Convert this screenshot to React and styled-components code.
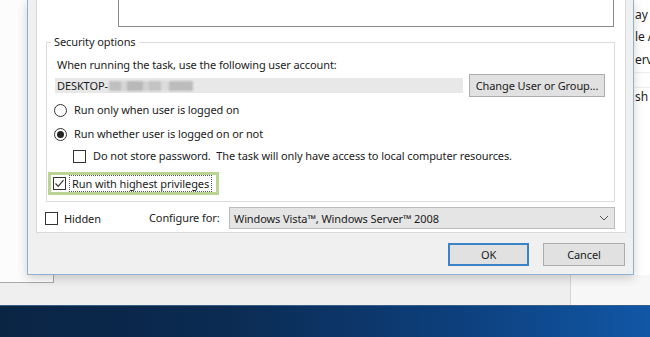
import React from 'react';
import styled, { createGlobalStyle } from 'styled-components';

const Global = createGlobalStyle`
  html, body { margin: 0; padding: 0; }
  body { background: #efefef; font-family: "Noto Sans", "Open Sans", sans-serif; }
  * { box-sizing: border-box; }
`;

const Screen = styled.div`
  width: 650px;
  height: 337px;
  overflow: hidden;
  display: grid;
  grid-template-rows: 305px 32px;
  font-size: 11px;
  letter-spacing: -0.1px;
  color: #1b1b1b;
`;

const Desktop = styled.div`
  position: relative;
  background: #efefef;
  overflow: hidden;
`;

const LeftWindow = styled.div`
  position: absolute;
  left: 0;
  top: 0;
  width: 54px;
  height: 283px;
  background: #fcfcfc;
  border-right: 1px solid #a9a9a9;
  border-bottom: 1px solid #a9a9a9;
`;

const RightWindow = styled.div`
  position: absolute;
  left: 570px;
  top: 0;
  width: 80px;
  height: 305px;
  background: #f7f7f7;
  border-left: 1px solid #d4d4d4;
  overflow: hidden;
`;

const RightPane = styled.div`
  height: 275px;
  background: #ffffff;
  padding: 6px 0 0 64px;
  display: flex;
  flex-direction: column;
  font-size: 12px;
`;

const RightItem = styled.div`
  height: ${p => p.$h}px;
  line-height: 18px;
  white-space: nowrap;
  border-bottom: ${p => (p.$line ? '1px solid #ececec' : 'none')};
`;

const Dialog = styled.div`
  position: absolute;
  left: 27px;
  top: 0;
  width: 607px;
  height: 275px;
  background: #f0f0f0;
  border: 1px solid #8db1d2;
  border-top: none;
  box-shadow: 0 3px 10px rgba(0, 0, 0, 0.18);
  display: flex;
  flex-direction: column;
`;

const Panel = styled.div`
  margin: 0 7px 0 8px;
  height: 233px;
  background: #ffffff;
  border: 1px solid #dadada;
  border-top: none;
  display: flex;
  flex-direction: column;
`;

const TextBox = styled.div`
  margin: 0 11px 0 81px;
  height: 27px;
  border: 1px solid #8a8a8a;
  border-top: none;
  background: #ffffff;
  flex: none;
`;

const GroupBox = styled.div`
  position: relative;
  margin: 15px 10px 0 9px;
  height: 160px;
  border: 1px solid #dcdcdc;
  padding: 13px 0 0 0;
  display: flex;
  flex-direction: column;
  flex: none;
`;

const Legend = styled.span`
  position: absolute;
  left: 4px;
  top: -10px;
  padding: 0 3px;
  background: #ffffff;
  line-height: 18px;
`;

const TextRow = styled.div`
  height: 18px;
  line-height: 18px;
  padding-left: 10px;
`;

const AccountRow = styled.div`
  display: flex;
  align-items: center;
  height: 23px;
  padding-left: 8px;
  gap: 6px;
`;

const AccountField = styled.div`
  width: 408px;
  height: 15px;
  background: #e8e8e8;
  display: flex;
  align-items: center;
  padding-left: 2px;
  line-height: 15px;
`;

const Blurred = styled.span`
  display: inline-block;
  width: 84px;
  height: 10px;
  margin-left: 1px;
  background: linear-gradient(90deg, #b9b9b9 0 14%, #d4d4d4 14% 22%, #b0b0b0 22% 40%, #cfcfcf 40% 48%, #bdbdbd 48% 62%, #dadada 62% 72%, #b5b5b5 72% 100%);
  filter: blur(1.3px);
  opacity: 0.85;
`;

const Button = styled.button`
  width: ${p => p.$w}px;
  height: 23px;
  padding: 0;
  font: inherit;
  letter-spacing: inherit;
  white-space: nowrap;
  color: #1b1b1b;
  background: #e1e1e1;
  border: ${p => (p.$default ? '2px solid #3b84c8' : '1px solid #adadad')};
  flex: none;
`;

const OptionRow = styled.div`
  display: flex;
  align-items: center;
  height: ${p => p.$h}px;
  padding-left: ${p => p.$indent}px;
  gap: 7px;
  margin-top: ${p => p.$mt || 0}px;
`;

const Radio = styled.span`
  width: 13px;
  height: 13px;
  border-radius: 50%;
  border: 1px solid #333333;
  background: #ffffff;
  display: flex;
  align-items: center;
  justify-content: center;
  flex: none;
  &::after {
    content: '';
    width: 7px;
    height: 7px;
    border-radius: 50%;
    background: ${p => (p.$checked ? '#222222' : 'transparent')};
  }
`;

const Check = styled.span`
  width: 13px;
  height: 13px;
  border: 1px solid #333333;
  background: #ffffff;
  display: flex;
  align-items: center;
  justify-content: center;
  flex: none;
`;

const Highlight = styled.div`
  margin: 6px 0 0 1px;
  width: 171px;
  height: 23px;
  border: 3px solid #bcd396;
  display: flex;
  align-items: center;
  padding-left: 2px;
  gap: 3px;
`;

const Focus = styled.span`
  border: 1px dotted #555555;
  padding: 0 2px;
  line-height: 15px;
  white-space: nowrap;
`;

const Label = styled.span`
  white-space: nowrap;
  line-height: 18px;
`;

const BottomRow = styled.div`
  display: flex;
  align-items: center;
  height: 22px;
  margin-top: 5px;
  padding-left: 8px;
`;

const HiddenLabel = styled.span`
  margin-left: 6px;
  width: 85px;
`;

const Combo = styled.div`
  margin-left: auto;
  margin-right: 10px;
  width: 386px;
  height: 22px;
  background: #e5e5e5;
  border: 1px solid #bcbcbc;
  display: flex;
  align-items: center;
  padding: 0 5px 0 4px;
  justify-content: space-between;
  white-space: nowrap;
`;

const ButtonBar = styled.div`
  flex: 1;
  display: flex;
  justify-content: flex-end;
  align-items: flex-start;
  padding: 10px 8px 0 0;
  gap: 14px;
`;

const Taskbar = styled.div`
  background: linear-gradient(90deg, #0a2444 0%, #0b2b52 35%, #0d3f7c 70%, #1157a6 100%);
  border-top: 1px solid #3a5f86;
`;

const CheckMark = () => (
  <svg width="11" height="11" viewBox="0 0 11 11">
    <polyline points="1.5,5.5 4.2,8.3 9.5,2.2" fill="none" stroke="#333" strokeWidth="1.2" />
  </svg>
);

const Chevron = () => (
  <svg width="10" height="6" viewBox="0 0 10 6">
    <polyline points="1,1 5,5 9,1" fill="none" stroke="#555" strokeWidth="1" />
  </svg>
);

export default function App() {
  return (
    <Screen>
      <Global />
      <Desktop>
        <LeftWindow />
        <RightWindow>
          <RightPane>
            <RightItem $h={22}>ay .</RightItem>
            <RightItem $h={23}>le A</RightItem>
            <RightItem $h={22} $line>ervi</RightItem>
            <RightItem $h={15} $line />
            <RightItem $h={24}>sh</RightItem>
          </RightPane>
        </RightWindow>
        <Dialog>
          <Panel>
            <TextBox />
            <GroupBox>
              <Legend>Security options</Legend>
              <TextRow>When running the task, use the following user account:</TextRow>
              <AccountRow>
                <AccountField>
                  DESKTOP-<Blurred />
                </AccountField>
                <Button $w={136}>Change User or Group...</Button>
              </AccountRow>
              <OptionRow $h={24} $indent={7} $mt={1}>
                <Radio />
                <Label>Run only when user is logged on</Label>
              </OptionRow>
              <OptionRow $h={24} $indent={7}>
                <Radio $checked />
                <Label>Run whether user is logged on or not</Label>
              </OptionRow>
              <OptionRow $h={20} $indent={26}>
                <Check />
                <Label>Do not store password.&nbsp; The task will only have access to local computer resources.</Label>
              </OptionRow>
              <Highlight>
                <Check>
                  <CheckMark />
                </Check>
                <Focus>Run with highest privileges</Focus>
              </Highlight>
            </GroupBox>
            <BottomRow>
              <Check />
              <HiddenLabel>Hidden</HiddenLabel>
              <Label>Configure for:</Label>
              <Combo>
                <span>Windows Vista™, Windows Server™ 2008</span>
                <Chevron />
              </Combo>
            </BottomRow>
          </Panel>
          <ButtonBar>
            <Button $w={81} $default>OK</Button>
            <Button $w={82}>Cancel</Button>
          </ButtonBar>
        </Dialog>
      </Desktop>
      <Taskbar />
    </Screen>
  );
}
